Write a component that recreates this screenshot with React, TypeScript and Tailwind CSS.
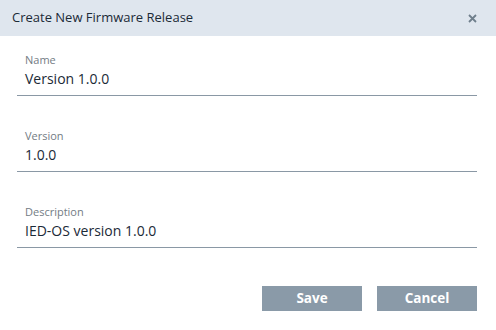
export default function App() {
  const fields = [
    { label: "Name", value: "Version 1.0.0" },
    { label: "Version", value: "1.0.0" },
    { label: "Description", value: "IED-OS version 1.0.0" },
  ];
  return (
    <div className="w-[496px] h-[330px] bg-white flex flex-col" style={{ fontFamily: '"Open Sans", "Noto Sans", sans-serif' }}>
      <div className="h-9 bg-[#dfe6ee] flex items-center justify-between pl-3 pr-[19px]">
        <span className="text-[13px] text-[#1b2a37]">Create New Firmware Release</span>
        <svg width="9" height="9" viewBox="0 0 9 9">
          <path d="M1 1L8 8M8 1L1 8" stroke="#6f7f8c" strokeWidth="1.8" />
        </svg>
      </div>
      <div className="flex flex-col px-[17px] pt-[17px] gap-[33px]">
        {fields.map((f) => (
          <div key={f.label} className="flex flex-col border-b border-[#8a98a5] pb-[4px] w-[460px]">
            <span className="pl-2 text-[11px] leading-[14px] text-[#737c84]">{f.label}</span>
            <span className="pl-2 text-[14px] leading-[24px] text-[#1b2a37]">{f.value}</span>
          </div>
        ))}
      </div>
      <div className="flex justify-end gap-[15px] pr-[19px] mt-[38px]">
        <button className="w-[100px] h-[25px] bg-[#8a9aa8] text-white text-[13.5px] font-bold">Save</button>
        <button className="w-[100px] h-[25px] bg-[#8a9aa8] text-white text-[13.5px] font-bold">Cancel</button>
      </div>
    </div>
  );
}
